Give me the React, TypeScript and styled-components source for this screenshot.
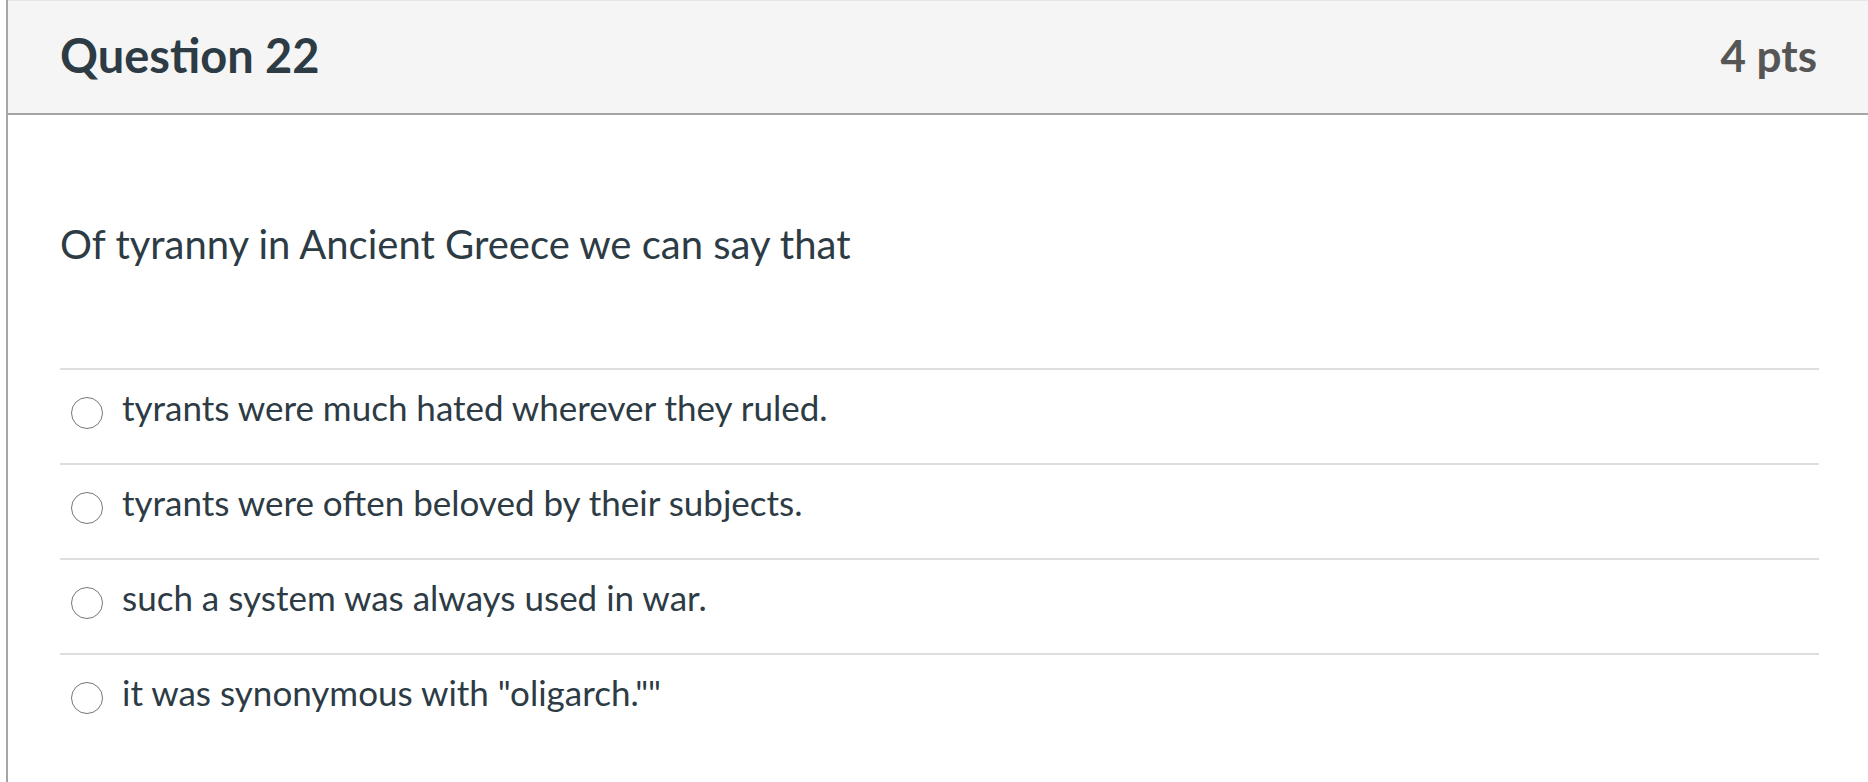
import React from "react";
import styled, { createGlobalStyle } from "styled-components";

const GlobalStyle = createGlobalStyle`
  html, body {
    margin: 0;
    padding: 0;
    background: #ffffff;
  }
  body {
    font-family: Lato, "Open Sans", sans-serif;
    color: #2d3b45;
    overflow: hidden;
  }
`;

const Page = styled.div`
  padding-left: 6px;
`;

const Card = styled.div`
  border-left: 2px solid #a5a5a5;
  min-height: 782px;
`;

const Header = styled.div`
  display: flex;
  align-items: center;
  justify-content: space-between;
  padding: 0 51px 5px 52px;
  background: #f5f5f5;
  border-top: 1px solid #e6e6e6;
  border-bottom: 2px solid #a5a5a5;
  box-sizing: border-box;
  height: 115px;
`;

const Title = styled.h2`
  margin: 0;
  font-size: 47px;
  font-weight: 700;
  color: #2d3b45;
`;

const Points = styled.div`
  font-size: 44px;
  font-weight: 700;
  color: #565656;
`;

const Body = styled.div`
  padding: 105px 49px 0 52px;
`;

const Prompt = styled.p`
  margin: 0 0 100px;
  font-size: 40px;
  line-height: 48px;
`;

const Answers = styled.ul`
  list-style: none;
  margin: 0;
  padding: 0;
`;

const Answer = styled.li`
  display: flex;
  align-items: flex-start;
  gap: 19px;
  height: 95px;
  box-sizing: border-box;
  padding: 16px 0 0 11px;
  border-top: 2px solid #dedede;
`;

const Radio = styled.span`
  flex: none;
  width: 30px;
  height: 30px;
  margin-top: 11px;
  border: 1px solid #777777;
  border-radius: 50%;
  background: #ffffff;
`;

const AnswerText = styled.span`
  font-size: 35px;
  line-height: 42px;
`;

const answers = [
  "tyrants were much hated wherever they ruled.",
  "tyrants were often beloved by their subjects.",
  "such a system was always used in war.",
  'it was synonymous with "oligarch.""',
];

export default function App() {
  return (
    <Page>
      <GlobalStyle />
      <Card>
        <Header>
          <Title>Question 22</Title>
          <Points>4 pts</Points>
        </Header>
        <Body>
          <Prompt>Of tyranny in Ancient Greece we can say that</Prompt>
          <Answers>
            {answers.map((a) => (
              <Answer key={a}>
                <Radio />
                <AnswerText>{a}</AnswerText>
              </Answer>
            ))}
          </Answers>
        </Body>
      </Card>
    </Page>
  );
}
